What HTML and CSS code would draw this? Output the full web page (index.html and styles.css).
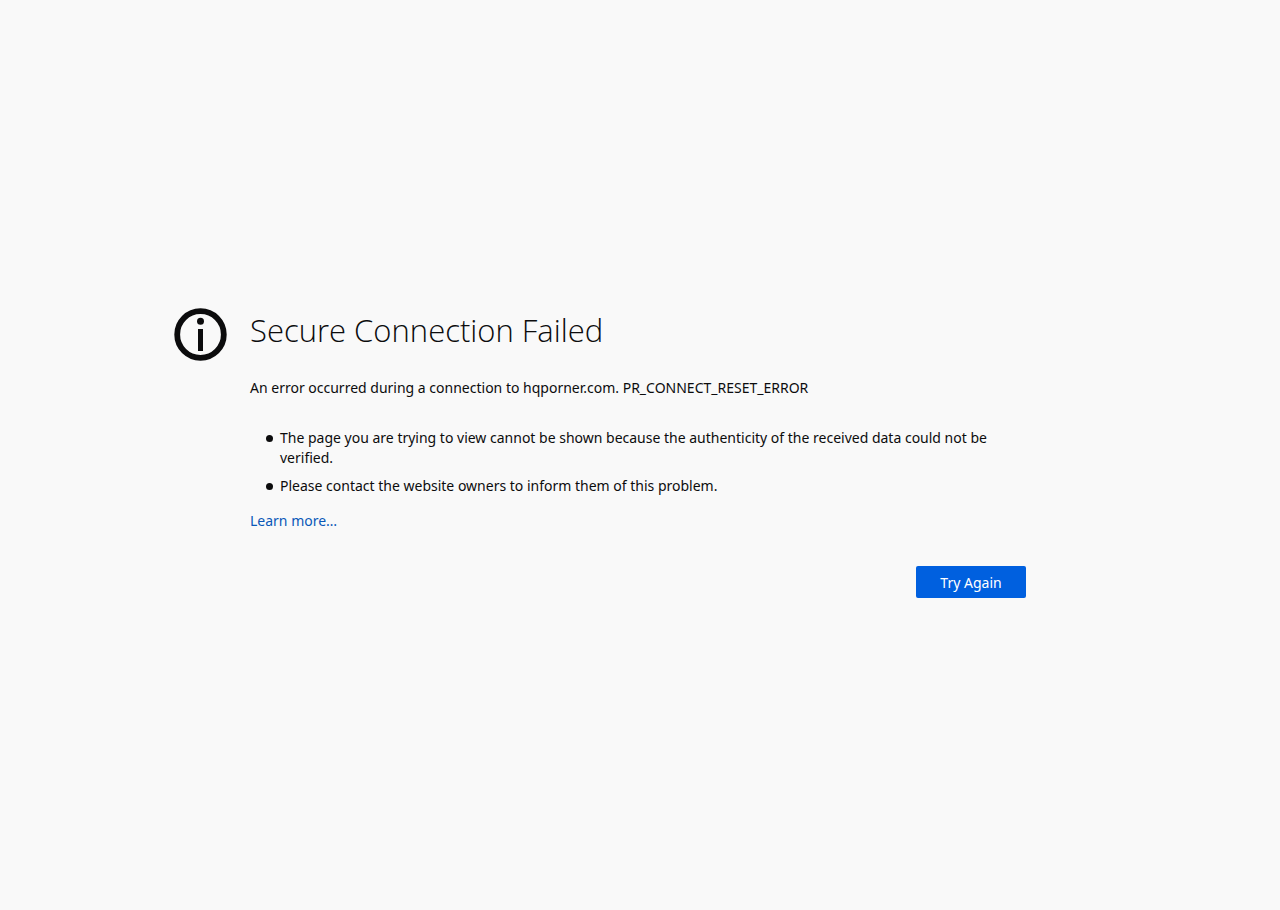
FILE: index.html
```html
<!DOCTYPE html>
<html lang="en">
  <head>
    <meta charset="UTF-8" />
    <meta name="viewport" content="width=device-width, initial-scale=1.0" />
    <title>Secure Connection Failed</title>
    <link rel="stylesheet" href="styles.css">
  </head>
  <body>
    <main class="container">
      <svg class="info-icon" viewBox="0 0 53 53" aria-hidden="true">
        <circle cx="26.5" cy="26.5" r="23.3" fill="none" stroke="currentColor" stroke-width="5.8" />
        <circle cx="26.5" cy="13.2" r="3.5" fill="currentColor" />
        <rect x="24" y="21" width="5" height="22" fill="currentColor" />
      </svg>

      <div class="content">
        <h1>Secure Connection Failed</h1>
        <p class="description">An error occurred during a connection to hqporner.com. PR_CONNECT_RESET_ERROR</p>

        <ul class="reasons">
          <li>The page you are trying to view cannot be shown because the authenticity of the received data could not be verified.</li>
          <li>Please contact the website owners to inform them of this problem.</li>
        </ul>

        <a class="learn-more" href="#">Learn more…</a>

        <div class="actions">
          <button type="button" class="try-again" id="tryAgain">Try Again</button>
        </div>
      </div>
    </main>

    <script>
      document.getElementById("tryAgain").addEventListener("click", () => {
        window.location.reload();
      });
    </script>
  </body>
</html>
```

FILE: styles.css
```css
:root {
  --bg: #f9f9f9;
  --text: #0c0c0d;
  --link: #0a58b8;
  --primary: #0060df;
  --primary-dark: #003eaa;
}

* {
  margin: 0;
  padding: 0;
  box-sizing: border-box;
}

body {
  background-color: var(--bg);
  color: var(--text);
  font-family: "Noto Sans", sans-serif;
  font-size: 14px;
  line-height: 20px;
  min-height: 100vh;
  display: flex;
  align-items: center;
  justify-content: center;
  padding: 48px 128px 52px 48px;
}

.container {
  display: flex;
  gap: 23px;
  width: 100%;
  max-width: 852px;
}

.info-icon {
  flex: none;
  width: 53px;
  height: 53px;
}

.content {
  flex: 1;
}

h1 {
  font-family: "Open Sans", "Noto Sans", sans-serif;
  font-size: 31px;
  font-weight: 300;
  line-height: 44px;
  margin-bottom: 26px;
}

.description {
  margin-bottom: 30px;
}

.reasons {
  list-style: none;
  margin-bottom: 15px;
}

.reasons li {
  display: flex;
  gap: 7px;
  padding-left: 16px;
}

.reasons li::before {
  content: "";
  flex: none;
  width: 7px;
  height: 7px;
  margin-top: 7px;
  border-radius: 50%;
  background-color: var(--text);
}

.reasons li + li {
  margin-top: 8px;
}

.learn-more {
  display: block;
  width: fit-content;
  color: var(--link);
  text-decoration: none;
}

.learn-more:hover {
  text-decoration: underline;
}

.actions {
  display: flex;
  justify-content: flex-end;
  margin-top: 35px;
}

.try-again {
  min-width: 110px;
  height: 32px;
  padding: 2px 20px 0;
  background-color: var(--primary);
  color: white;
  border: none;
  border-radius: 2px;
  font: inherit;
  cursor: pointer;
}

.try-again:hover {
  background-color: var(--primary-dark);
}
```
